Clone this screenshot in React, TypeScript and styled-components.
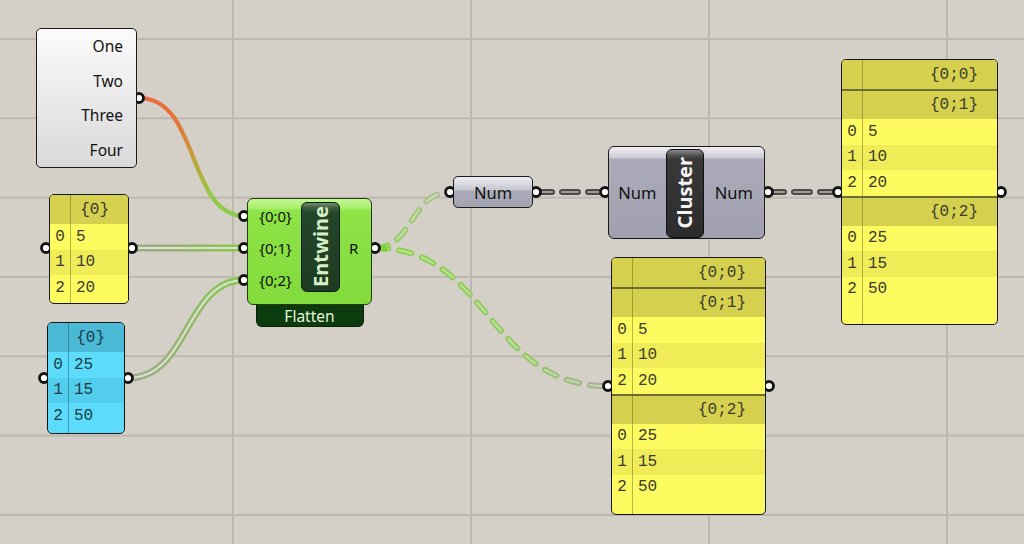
import React from 'react';
import styled, { createGlobalStyle } from 'styled-components';

const GlobalStyle = createGlobalStyle`
  html, body {
    margin: 0;
    padding: 0;
  }
  body {
    background: #d4d0c8;
    font-family: 'Noto Sans', 'Open Sans', sans-serif;
    overflow: hidden;
  }
`;

const Canvas = styled.div`
  position: relative;
  width: 1024px;
  height: 544px;
  overflow: hidden;
  background-color: #d4d0c8;
  background-image:
    linear-gradient(to right, #bcb8b0 0 2px, transparent 2px),
    linear-gradient(to bottom, #bcb8b0 0 2px, transparent 2px);
  background-size: 238px 100%, 100% 79.33px;
  background-position: 232px 0, 0 38px;
`;

const WireLayer = styled.svg`
  position: absolute;
  left: 0;
  top: 0;
  width: 1024px;
  height: 544px;
`;

type Box = { $x: number; $y: number; $w: number; $h: number };

// every node on the canvas sits at its own spot
const Placed = styled.div<Box>`
  position: absolute;
  left: ${p => p.$x}px;
  top: ${p => p.$y}px;
  width: ${p => p.$w}px;
  height: ${p => p.$h}px;
  box-sizing: border-box;
`;

/* value list */

const ValueList = styled(Placed)`
  border: 1.5px solid #1a1a1a;
  border-radius: 5px;
  background: linear-gradient(to bottom, #fbfbfb, #d9d9d9);
  display: grid;
  grid-template-rows: repeat(4, 1fr);
  padding-right: 13px;
`;

const ListItem = styled.div`
  display: flex;
  align-items: center;
  justify-content: flex-end;
  font-size: 15.5px;
  color: #111;
`;

/* panels */

const tones = {
  yellow: {
    body: '#fdfb60',
    alt: '#efec58',
    head: '#d6d04f',
    sep: '#6e6a36',
    text: '#3a3a2e',
    rule: 'rgba(100, 95, 30, 0.45)',
  },
  blue: {
    body: '#5cdcfa',
    alt: '#52cdec',
    head: '#4ab9d6',
    sep: '#1d5a6a',
    text: '#163c48',
    rule: 'rgba(20, 80, 100, 0.45)',
  },
};

type Tone = keyof typeof tones;

const PanelBox = styled(Placed)<{ $tone: Tone }>`
  border: 1.5px solid #161616;
  border-radius: 5px;
  overflow: hidden;
  background: ${p => tones[p.$tone].body};
  color: ${p => tones[p.$tone].text};
  font-family: 'Liberation Mono', 'Courier New', monospace;
  font-size: 16px;

  &::before {
    content: '';
    position: absolute;
    top: 0;
    bottom: 0;
    left: 20px;
    width: 1px;
    background: ${p => tones[p.$tone].rule};
    z-index: 1;
  }
`;

const PathHead = styled.div<{ $tone: Tone; $sep: boolean }>`
  height: ${p => (p.$sep ? 30 : 29)}px;
  box-sizing: border-box;
  border-top: ${p => (p.$sep ? `2px solid ${tones[p.$tone].sep}` : 'none')};
  display: flex;
  align-items: center;
  justify-content: flex-end;
  padding-right: 19px;
  background: ${p => tones[p.$tone].head};
`;

const DataRow = styled.div<{ $tone: Tone; $alt: boolean }>`
  display: grid;
  grid-template-columns: 20px 1fr;
  align-items: center;
  height: 25.5px;
  background: ${p => (p.$alt ? tones[p.$tone].alt : tones[p.$tone].body)};
`;

const RowIndex = styled.span`
  text-align: center;
`;

const RowValue = styled.span`
  padding-left: 6px;
`;

type Branch = { path: string; values: string[] };

const Panel: React.FC<{
  x: number;
  y: number;
  w: number;
  h: number;
  tone: Tone;
  branches: Branch[];
}> = ({ x, y, w, h, tone, branches }) => (
  <PanelBox $x={x} $y={y} $w={w} $h={h} $tone={tone}>
    {branches.map((b, i) => (
      <React.Fragment key={b.path}>
        <PathHead $tone={tone} $sep={i > 0}>
          {b.path}
        </PathHead>
        {b.values.map((v, j) => (
          <DataRow key={j} $tone={tone} $alt={j % 2 === 1}>
            <RowIndex>{j}</RowIndex>
            <RowValue>{v}</RowValue>
          </DataRow>
        ))}
      </React.Fragment>
    ))}
  </PanelBox>
);

/* components */

const greenFace =
  'linear-gradient(to bottom, #c4f79a 0px, #a6ee66 10px, #8fe447 11px, #82da3c 100%)';
const grayFace =
  'linear-gradient(to bottom, #f0f0f4 0px, #c9c9d2 11px, #aaaab8 12px, #a0a0af 100%)';

const CompStack = styled(Placed)`
  display: flex;
  flex-direction: column;
  align-items: center;
`;

const CompBody = styled.div<{ $face: string; $height: string }>`
  position: relative;
  z-index: 1;
  width: 100%;
  height: ${p => p.$height};
  flex: none;
  box-sizing: border-box;
  border: 1.5px solid ${p => (p.$face === greenFace ? '#1f3a14' : '#1a1a1a')};
  border-radius: 6px;
  background: ${p => p.$face};
  display: flex;
`;

const PortColumn = styled.div<{ $w?: number; $pad?: number }>`
  ${p => (p.$w ? `width: ${p.$w}px; flex: none;` : 'flex: 1;')}
  display: grid;
  grid-template-rows: repeat(3, 32px);
  align-content: start;
  padding-top: 1px;
  padding-left: ${p => p.$pad ?? 0}px;
  font-size: 15px;
  color: #101010;
`;

const Port = styled.span<{ $row: number; $start?: boolean }>`
  grid-row: ${p => p.$row};
  display: flex;
  align-items: center;
  justify-content: ${p => (p.$start ? 'flex-start' : 'center')};
`;

const SideLabel = styled.div<{ $w?: number }>`
  ${p => (p.$w ? `width: ${p.$w}px; flex: none;` : 'flex: 1;')}
  display: flex;
  align-items: center;
  justify-content: center;
  font-size: 16.5px;
  color: #111;
`;

const NameBox = styled.div<{ $dark: boolean; $w: number; $m: string }>`
  width: ${p => p.$w}px;
  flex: none;
  box-sizing: border-box;
  margin: ${p => p.$m};
  border-radius: 6px;
  border: 1.5px solid ${p => (p.$dark ? '#101010' : '#0b1b0b')};
  background: ${p =>
    p.$dark
      ? 'linear-gradient(to bottom, #8a8a8a 0px, #565656 5px, #383838 9px, #2c2c2c 100%)'
      : 'linear-gradient(to bottom, #6f8f6f 0px, #3c5c3e 5px, #25452a 10px, #1d3b21 100%)'};
  display: flex;
  align-items: center;
  justify-content: center;
`;

const NameText = styled.span<{ $dark: boolean }>`
  writing-mode: vertical-rl;
  transform: rotate(180deg);
  font-weight: 700;
  font-size: 20px;
  line-height: 1;
  color: ${p => (p.$dark ? '#f4f4f4' : '#d6f0c6')};
`;

const FlagTab = styled.div`
  width: 108px;
  height: 24px;
  margin-top: -2px;
  padding-top: 2px;
  box-sizing: border-box;
  background: #0c3b0e;
  border: 1.5px solid #08210a;
  border-top: none;
  border-radius: 0 0 6px 6px;
  color: #e4f5dc;
  font-size: 15.5px;
  display: flex;
  align-items: center;
  justify-content: center;
`;

const ParamBox = styled(Placed)`
  border: 1.5px solid #1a1a1a;
  border-radius: 5px;
  background: linear-gradient(to bottom, #ececf0 0px, #c6c6d0 13px, #aaaab8 14px, #a2a2b1 100%);
  display: flex;
  align-items: center;
  justify-content: center;
  font-size: 16.5px;
  color: #111;
`;

/* wires and grips */

const grips: Array<[number, number]> = [
  [139, 98],
  [46, 248],
  [132, 248],
  [44, 378],
  [128, 378],
  [244, 216],
  [244, 248],
  [244, 280],
  [375, 248],
  [450, 192],
  [536, 192],
  [605, 192],
  [768, 192],
  [838, 192],
  [1001, 192],
  [608, 386],
  [769, 386],
];

const Wires: React.FC = () => (
  <WireLayer viewBox="0 0 1024 544">
    <defs>
      <linearGradient id="wOrange" gradientUnits="userSpaceOnUse" x1="139" y1="98" x2="245" y2="216">
        <stop offset="0" stopColor="#ee663e" />
        <stop offset="0.3" stopColor="#e2783a" />
        <stop offset="0.52" stopColor="#c0a23c" />
        <stop offset="0.75" stopColor="#96c846" />
        <stop offset="1" stopColor="#88cc48" />
      </linearGradient>
      <linearGradient id="wList1" gradientUnits="userSpaceOnUse" x1="132" y1="0" x2="245" y2="0">
        <stop offset="0" stopColor="#a2a792" />
        <stop offset="1" stopColor="#86c94a" />
      </linearGradient>
      <linearGradient id="wList2" gradientUnits="userSpaceOnUse" x1="128" y1="0" x2="245" y2="0">
        <stop offset="0" stopColor="#a2a792" />
        <stop offset="1" stopColor="#86c94a" />
      </linearGradient>
      <linearGradient id="wTreeA" gradientUnits="userSpaceOnUse" x1="375" y1="0" x2="450" y2="0">
        <stop offset="0" stopColor="#8ed350" />
        <stop offset="0.5" stopColor="#a0c878" />
        <stop offset="1" stopColor="#b4b9a6" />
      </linearGradient>
      <linearGradient id="wTreeB" gradientUnits="userSpaceOnUse" x1="375" y1="0" x2="608" y2="0">
        <stop offset="0" stopColor="#8ed350" />
        <stop offset="0.65" stopColor="#96c868" />
        <stop offset="1" stopColor="#aaae9c" />
      </linearGradient>
    </defs>

    <path d="M139 98 C200 98 187 216 245 216" fill="none" stroke="url(#wOrange)" strokeWidth="4.2" />

    <g fill="none">
      <path d="M132 248 L245 248" stroke="url(#wList1)" strokeWidth="7" />
      <path d="M132 248 L245 248" stroke="#dde1d0" strokeWidth="2" />
      <path d="M128 378 C190 378 184 280 245 280" stroke="url(#wList2)" strokeWidth="7" />
      <path d="M128 378 C190 378 184 280 245 280" stroke="#dde1d0" strokeWidth="2" />
    </g>

    <g fill="none" strokeLinecap="round">
      <path d="M375 248 C412 248 412 192 450 192" stroke="url(#wTreeA)" strokeWidth="6" strokeDasharray="13 11" />
      <path d="M375 248 C412 248 412 192 450 192" stroke="rgba(225,240,205,0.55)" strokeWidth="2" strokeDasharray="13 11" />
      <path d="M375 248 C490 248 487 386 608 386" stroke="url(#wTreeB)" strokeWidth="6" strokeDasharray="13 11" />
      <path d="M375 248 C490 248 487 386 608 386" stroke="rgba(225,240,205,0.55)" strokeWidth="2" strokeDasharray="13 11" />
      <path d="M536 192 L605 192" stroke="#4b4b49" strokeWidth="6" strokeDasharray="16 10" />
      <path d="M536 192 L605 192" stroke="#9c9c95" strokeWidth="2" strokeDasharray="16 10" />
      <path d="M768 192 L838 192" stroke="#4b4b49" strokeWidth="6" strokeDasharray="16 10" />
      <path d="M768 192 L838 192" stroke="#9c9c95" strokeWidth="2" strokeDasharray="16 10" />
    </g>

    <circle cx="384" cy="248" r="3.8" fill="#7fd23c" />

    {grips.map(([cx, cy]) => (
      <circle key={`${cx}-${cy}`} cx={cx} cy={cy} r="4.5" fill="#fff" stroke="#111" strokeWidth="2.8" />
    ))}
  </WireLayer>
);

const rightBranches: Branch[] = [
  { path: '{0;0}', values: [] },
  { path: '{0;1}', values: ['5', '10', '20'] },
  { path: '{0;2}', values: ['25', '15', '50'] },
];

export default function App() {
  return (
    <>
      <GlobalStyle />
      <Canvas>
        <Wires />

        <ValueList $x={36} $y={28} $w={101} $h={140}>
          {['One', 'Two', 'Three', 'Four'].map(it => (
            <ListItem key={it}>{it}</ListItem>
          ))}
        </ValueList>

        <Panel x={49} y={194} w={80} h={110} tone="yellow" branches={[{ path: '{0}', values: ['5', '10', '20'] }]} />
        <Panel x={47} y={322} w={78} h={112} tone="blue" branches={[{ path: '{0}', values: ['25', '15', '50'] }]} />

        <CompStack $x={247} $y={198} $w={125} $h={129}>
          <CompBody $face={greenFace} $height="107px">
            <PortColumn $w={51} $pad={2}>
              <Port $row={1}>{'{0;0}'}</Port>
              <Port $row={2}>{'{0;1}'}</Port>
              <Port $row={3}>{'{0;2}'}</Port>
            </PortColumn>
            <NameBox $dark={false} $w={39} $m="2.5px 0 12.5px">
              <NameText $dark={false}>Entwine</NameText>
            </NameBox>
            <PortColumn $pad={9}>
              <Port $row={2} $start>
                R
              </Port>
            </PortColumn>
          </CompBody>
          <FlagTab>Flatten</FlagTab>
        </CompStack>

        <ParamBox $x={453} $y={176} $w={80} $h={32}>
          Num
        </ParamBox>

        <CompStack $x={608} $y={146} $w={157} $h={93}>
          <CompBody $face={grayFace} $height="100%">
            <SideLabel $w={56.5}>Num</SideLabel>
            <NameBox $dark $w={38} $m="1.5px 0 0.5px">
              <NameText $dark>Cluster</NameText>
            </NameBox>
            <SideLabel>Num</SideLabel>
          </CompBody>
        </CompStack>

        <Panel x={611} y={257} w={155} h={258} tone="yellow" branches={rightBranches} />
        <Panel x={841} y={59} w={157} h={266} tone="yellow" branches={rightBranches} />
      </Canvas>
    </>
  );
}
